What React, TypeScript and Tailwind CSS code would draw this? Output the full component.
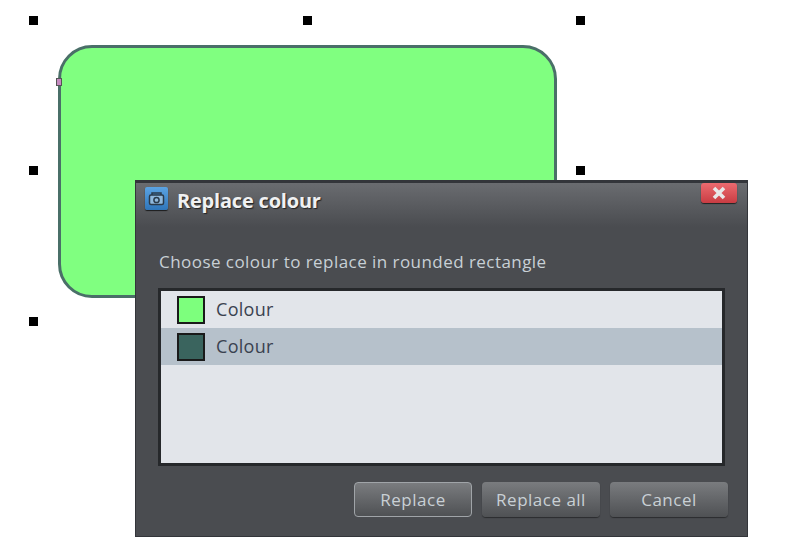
const font = { fontFamily: '"Open Sans", "Noto Sans", sans-serif' };

function Handle({ className }: { className: string }) {
  return <div className={`absolute size-[9px] bg-black ${className}`} />;
}

function Swatch({ color }: { color: string }) {
  return <div className={`size-[28px] border-2 border-[#1a1a1a] ${color}`} />;
}

function Row({ color, selected }: { color: string; selected?: boolean }) {
  return (
    <div className={`flex h-[37px] items-center gap-[11px] pl-[16px] ${selected ? 'bg-[#b6c1cb]' : ''}`}>
      <Swatch color={color} />
      <span className="text-[18px] tracking-[0.3px] text-[#3a4250]">Colour</span>
    </div>
  );
}

function DialogButton({ label, focused }: { label: string; focused?: boolean }) {
  return (
    <button
      className={`h-[35px] w-[118px] rounded-[4px] bg-gradient-to-b from-[#7a7c7f] to-[#4f5154] text-[17px] leading-[30px] tracking-[0.5px] text-[#c9d0d5] ${
        focused ? 'border border-[#a0a4a8]' : 'shadow-[0_1px_1px_#2b2c2e]'
      }`}
    >
      {label}
    </button>
  );
}

export default function App() {
  return (
    <div className="relative h-[552px] w-[788px] overflow-hidden bg-white" style={font}>
      {/* selected shape on the canvas */}
      <div className="absolute left-[58px] top-[45px] h-[253px] w-[499px] rounded-[34px] border-[3px] border-[#4a6f68] bg-[#80ff80]" />
      <div className="absolute left-[56px] top-[78px] h-[8px] w-[6px] border border-[#555] bg-[#c58ac0]" />
      <Handle className="left-[29px] top-[16px]" />
      <Handle className="left-[303px] top-[16px]" />
      <Handle className="left-[576px] top-[16px]" />
      <Handle className="left-[29px] top-[166px]" />
      <Handle className="left-[576px] top-[166px]" />
      <Handle className="left-[29px] top-[317px]" />

      {/* dialog */}
      <div className="absolute left-[135px] top-[180px] flex h-[357px] w-[613px] flex-col border border-[#33353a] border-t-[3px] bg-[#4a4c50]">
        <div className="flex h-[44px] items-start gap-[9px] bg-gradient-to-b from-[#6a6c70] to-[#4a4c50] pl-[9px] pt-[4px]">
          <div className="flex size-[23px] items-center justify-center rounded-[2px] bg-gradient-to-b from-[#5ba3e2] to-[#2f76ba] shadow-[0_1px_1px_#1c1c1c]">
            <svg width="17" height="15" viewBox="0 0 17 15" fill="none" stroke="#2a3a4a" strokeWidth="1.5">
              <path d="M4 4V2h9v2" />
              <rect x="1.5" y="4" width="14" height="9.5" rx="1.5" fill="#8fb8dc" />
              <circle cx="8.5" cy="9" r="2.6" />
            </svg>
          </div>
          <span className="-mt-[1px] text-[20px] font-bold leading-[30px] tracking-[-0.2px] text-[#f0f1f2] [text-shadow:1px_1px_1px_#222]">
            Replace colour
          </span>
          <div className="absolute right-[10px] top-0 flex h-[20px] w-[36px] items-center justify-center rounded-[3px] bg-gradient-to-b from-[#ec6a6f] to-[#c93c43] shadow-[0_1px_1px_#222]">
            <svg width="16" height="14" viewBox="0 0 16 14" stroke="#e8e8e8" strokeWidth="3.6">
              <path d="M3 2l10 10M13 2L3 12" />
            </svg>
          </div>
        </div>

        <p className="mt-[24px] pl-[23px] text-[17px] leading-[22px] tracking-[0.45px] text-[#c8d0d6]">
          Choose colour to replace in rounded rectangle
        </p>

        <div className="ml-[22px] mr-[22px] mt-[15px] h-[178px] border-[3px] border-[#26282b] bg-[#e2e5ea]">
          <Row color="bg-[#7dff7d]" />
          <Row color="bg-[#3a645e]" selected />
        </div>

        <div className="mt-[16px] flex justify-end gap-[10px] pr-[19px]">
          <DialogButton label="Replace" focused />
          <DialogButton label="Replace all" />
          <DialogButton label="Cancel" />
        </div>
      </div>
    </div>
  );
}
